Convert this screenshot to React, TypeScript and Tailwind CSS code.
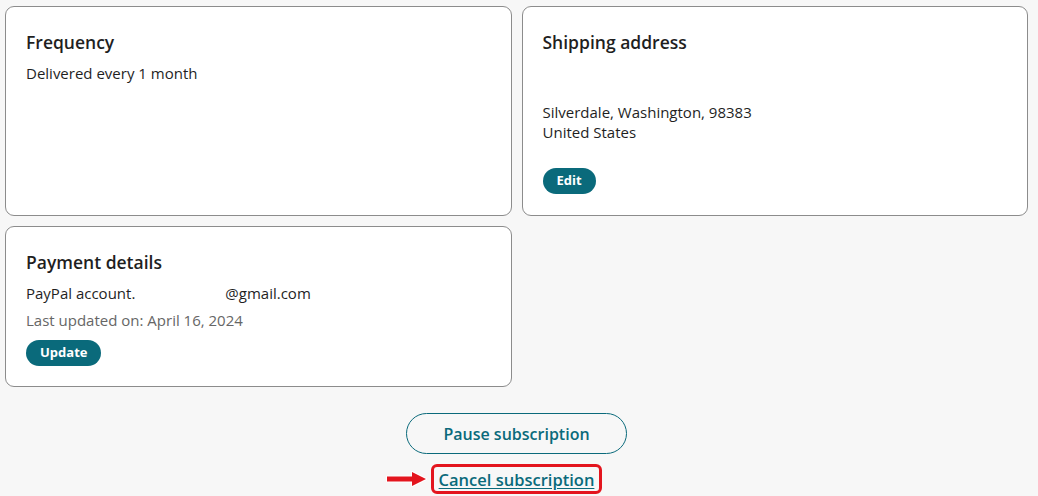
function Card({ children, className = '' }: { children: React.ReactNode; className?: string }) {
  return (
    <section className={`bg-white rounded-[9px] border border-[#8c8c8c] px-5 pt-[21px] pb-5 ${className}`}>
      {children}
    </section>
  );
}

function PillButton({ label }: { label: string }) {
  return (
    <button className="h-[26px] px-[14px] rounded-full bg-[#0a6a7b] text-white text-[13px] font-bold leading-none">
      {label}
    </button>
  );
}

function App() {
  return (
    <div
      className="min-h-screen bg-[#f7f7f7] pl-[5px] pr-[10px] pt-[6px] text-[#1f1f1f]"
      style={{ fontFamily: '"Open Sans", "Noto Sans", sans-serif' }}
    >
      <div className="grid grid-cols-2 gap-x-[10px] gap-y-[10px]">
        {/* Frequency */}
        <Card className="h-[210px]">
          <h2 className="text-[17.5px] leading-[28px] font-semibold">Frequency</h2>
          <p className="mt-[7px] text-[15px] leading-[20px]">Delivered every 1 month</p>
        </Card>

        {/* Shipping */}
        <Card className="h-[210px] flex flex-col">
          <h2 className="text-[17.5px] leading-[28px] font-semibold">Shipping address</h2>
          <div className="mt-[46px] text-[15px] leading-[20px]">
            <p>Silverdale, Washington, 98383</p>
            <p>United States</p>
          </div>
          <div className="mt-[25px]">
            <PillButton label="Edit" />
          </div>
        </Card>

        {/* Payment */}
        <Card className="h-[161px]">
          <h2 className="text-[17.5px] leading-[28px] font-semibold">Payment details</h2>
          <p className="mt-[7px] text-[15px] leading-[20px]">
            PayPal account.<span className="inline-block w-[90px]"></span>@gmail.com
          </p>
          <p className="mt-[7px] text-[15px] leading-[20px] text-[#666666]">Last updated on: April 16, 2024</p>
          <div className="mt-[9px]">
            <PillButton label="Update" />
          </div>
        </Card>
        <div />
      </div>

      <div className="flex flex-col items-center mt-[26px]">
        <button className="w-[221px] h-[41px] rounded-full border border-[#0a6a7b] text-[#0a6a7b] text-[16px] font-semibold bg-[#f7f7f7]">
          Pause subscription
        </button>
        <div className="relative mt-[10px]">
          <div className="px-[5px] pt-[2px] h-[30px] flex items-center rounded-[6px] border-[3px] border-[#e3151e]">
            <a href="#" className="text-[16.5px] font-semibold text-[#0a6a7b] underline underline-offset-2 leading-none">
              Cancel subscription
            </a>
          </div>
          <svg className="absolute left-[-46px] top-[6px]" width="44" height="18" viewBox="0 0 44 18">
            <path d="M2 6.5 H27 V2 L41 9 L27 16 V11.5 H2 Z" fill="#e3151e" stroke="white" strokeWidth="2" strokeLinejoin="round" paintOrder="stroke" />
          </svg>
        </div>
      </div>
    </div>
  );
}

export default App;
